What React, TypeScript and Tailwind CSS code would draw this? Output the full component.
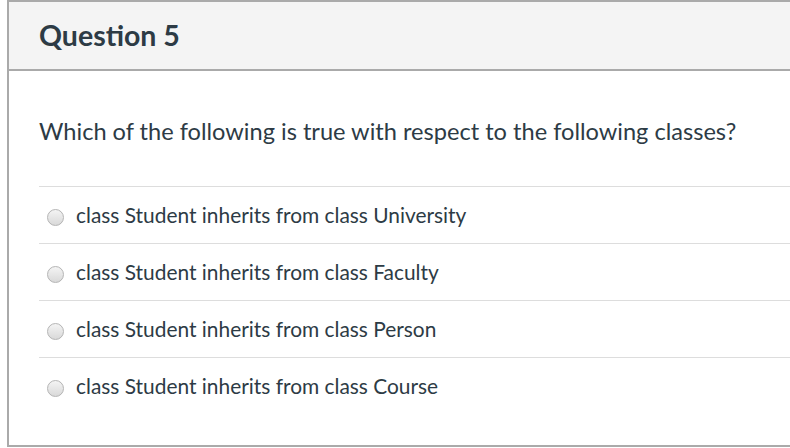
import React from "react";

const answers = [
  "class Student inherits from class University",
  "class Student inherits from class Faculty",
  "class Student inherits from class Person",
  "class Student inherits from class Course",
];

function Radio() {
  return (
    <span className="mt-[4px] block h-[17px] w-[17px] shrink-0 rounded-full border border-[#b4b4b4] bg-gradient-to-b from-[#f4f4f4] to-[#d9d9d9]" />
  );
}

export default function App() {
  return (
    <div className="h-[448px] w-[790px] overflow-hidden bg-white font-['Lato',sans-serif] text-[#2d3b45]">
      <div className="ml-[7px] w-[900px] border-y-2 border-l-2 border-[#aaaaaa]">
        <div className="flex h-[69px] items-center border-b-2 border-[#aaaaaa] bg-[#f4f4f4] pl-[30px]">
          <h2 className="text-[28.5px] font-bold leading-none">Question 5</h2>
        </div>
        <div className="pl-[30px] pb-[31px]">
          <p className="pt-[45px] pb-[40px] text-[23.6px] leading-[30px]">
            Which of the following is true with respect to the following classes?
          </p>
          <div className="flex flex-col">
            {answers.map((a) => (
              <label
                key={a}
                className="flex h-[57px] items-center gap-[12px] border-t border-[#dddddd] pl-[8px]"
              >
                <Radio />
                <span className="text-[20.9px] leading-none">{a}</span>
              </label>
            ))}
          </div>
        </div>
      </div>
    </div>
  );
}
